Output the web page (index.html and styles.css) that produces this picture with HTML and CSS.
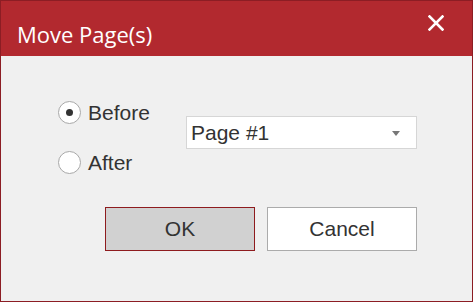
FILE: index.html
```html
<!DOCTYPE html>
<html>
<head>
<meta charset="utf-8">
<link rel="stylesheet" href="styles.css">
</head>
<body>
<div class="dialog">
  <div class="titlebar">
    <div class="title">Move Page(s)</div>
    <div class="close">
      <svg width="16" height="16" viewBox="0 0 16 16"><path d="M1.5 1.5 L14.5 14.5 M14.5 1.5 L1.5 14.5" stroke="#fff" stroke-width="2.6" stroke-linecap="square"/></svg>
    </div>
  </div>
  <div class="content">
    <div class="options">
      <div class="radios">
        <label class="radio-row"><span class="radio checked"><span class="dot"></span></span><span class="radio-label">Before</span></label>
        <label class="radio-row"><span class="radio"></span><span class="radio-label">After</span></label>
      </div>
      <div class="select">
        <span class="select-text">Page #1</span>
        <span class="arrow"></span>
      </div>
    </div>
    <div class="buttons">
      <div class="btn btn-ok">OK</div>
      <div class="btn btn-cancel">Cancel</div>
    </div>
  </div>
</div>
</body>
</html>
```

FILE: styles.css
```css
html, body {
  margin: 0;
  padding: 0;
  background: #f0f0f0;
}
.dialog {
  width: 473px;
  height: 302px;
  box-sizing: border-box;
  border: 1px solid #8c1d24;
  background: #f0f0f0;
  font-family: "Liberation Sans", Arial, sans-serif;
  color: #333;
}
.titlebar {
  height: 55px;
  background: #b2292f;
  display: flex;
  justify-content: space-between;
  align-items: flex-start;
  padding: 0 28px 0 16px;
}
.title {
  font-family: "Open Sans", sans-serif;
  font-size: 22px;
  line-height: 30px;
  color: #fff;
  margin-top: 18px;
}
.close {
  margin-top: 14px;
  width: 16px;
  height: 16px;
}
.close svg { display: block; }
.content {
  padding-top: 45px;
}
.options {
  display: flex;
  align-items: flex-start;
}
.radios {
  width: 128px;
  padding-left: 57px;
  display: flex;
  flex-direction: column;
  gap: 27px;
}
.radio-row {
  display: flex;
  align-items: center;
  height: 23px;
}
.radio {
  width: 23px;
  height: 23px;
  box-sizing: border-box;
  border: 1px solid #a8a8a8;
  border-radius: 50%;
  background: #fff;
  display: flex;
  align-items: center;
  justify-content: center;
}
.dot {
  width: 7px;
  height: 7px;
  border-radius: 50%;
  background: #333;
}
.radio-label {
  font-size: 21px;
  margin-left: 7px;
  line-height: 23px;
}
.select {
  margin-top: 15px;
  width: 231px;
  height: 33px;
  box-sizing: border-box;
  border: 1px solid #d6d6d6;
  background: #fff;
  display: flex;
  align-items: center;
  justify-content: space-between;
  padding: 0 16px 0 4px;
}
.select-text {
  font-size: 21px;
  line-height: 24px;
}
.arrow {
  width: 0;
  height: 0;
  border-left: 4.5px solid transparent;
  border-right: 4.5px solid transparent;
  border-top: 5px solid #777;
  margin-top: 1px;
}
.buttons {
  display: flex;
  gap: 12px;
  padding-left: 104px;
  margin-top: 33px;
}
.btn {
  width: 150px;
  height: 44px;
  box-sizing: border-box;
  display: flex;
  align-items: center;
  justify-content: center;
  font-size: 21px;
  color: #333;
}
.btn-ok {
  background: #d1d1d1;
  border: 1px solid #8e1b1e;
}
.btn-cancel {
  background: #fff;
  border: 1px solid #ababab;
}
```
